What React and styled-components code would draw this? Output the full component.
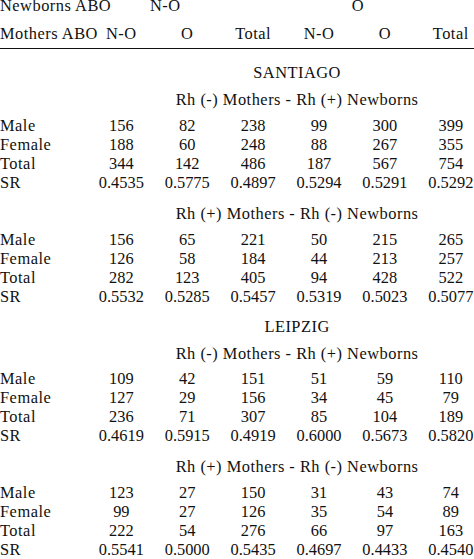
import React from "react";
import styled, { createGlobalStyle } from "styled-components";

const Global = createGlobalStyle`
  html, body {
    margin: 0;
    padding: 0;
    background: #ffffff;
    overflow: hidden;
  }
  body {
    font-family: "Liberation Serif", "Times New Roman", serif;
    color: #111111;
  }
`;

const LABEL_W = 88.4;
const COL_W = 65.9;

const Table = styled.div`
  width: ${LABEL_W + COL_W * 6}px;
  margin-top: -8px;
  font-size: 16.4px;
`;

const HeaderBlock = styled.div`
  border-bottom: 1.3px solid #111111;
`;

const Row = styled.div`
  display: grid;
  grid-template-columns: ${LABEL_W}px repeat(6, ${COL_W}px);
  height: ${(p) => p.$h}px;
  line-height: ${(p) => p.$h}px;
  white-space: nowrap;
`;

const Label = styled.div`
  text-align: left;
  letter-spacing: 0.5px;
`;

const GroupLabel = styled.div`
  grid-column: span 3;
  text-align: left;
  padding-left: ${(p) => p.$pad}px;
  letter-spacing: 0.5px;
`;

const HeadCell = styled.div`
  text-align: center;
  letter-spacing: 0.5px;
`;

const Num = styled.div`
  text-align: center;
`;

const Heading = styled.div`
  box-sizing: border-box;
  margin-left: ${LABEL_W}px;
  width: ${COL_W * 6}px;
  padding-left: 22px;
  margin-top: ${(p) => p.$mt}px;
  height: ${(p) => p.$h}px;
  line-height: ${(p) => p.$h}px;
  text-align: center;
  white-space: nowrap;
  letter-spacing: 0.5px;
`;

const Subgroup = styled.div`
  margin-top: ${(p) => p.$mt}px;
`;

const data = [
  {
    city: "SANTIAGO",
    groups: [
      {
        title: "Rh (-) Mothers - Rh (+) Newborns",
        rows: [
          ["Male", "156", "82", "238", "99", "300", "399"],
          ["Female", "188", "60", "248", "88", "267", "355"],
          ["Total", "344", "142", "486", "187", "567", "754"],
          ["SR", "0.4535", "0.5775", "0.4897", "0.5294", "0.5291", "0.5292"],
        ],
      },
      {
        title: "Rh (+) Mothers - Rh (-) Newborns",
        rows: [
          ["Male", "156", "65", "221", "50", "215", "265"],
          ["Female", "126", "58", "184", "44", "213", "257"],
          ["Total", "282", "123", "405", "94", "428", "522"],
          ["SR", "0.5532", "0.5285", "0.5457", "0.5319", "0.5023", "0.5077"],
        ],
      },
    ],
  },
  {
    city: "LEIPZIG",
    groups: [
      {
        title: "Rh (-) Mothers - Rh (+) Newborns",
        rows: [
          ["Male", "109", "42", "151", "51", "59", "110"],
          ["Female", "127", "29", "156", "34", "45", "79"],
          ["Total", "236", "71", "307", "85", "104", "189"],
          ["SR", "0.4619", "0.5915", "0.4919", "0.6000", "0.5673", "0.5820"],
        ],
      },
      {
        title: "Rh (+) Mothers - Rh (-) Newborns",
        rows: [
          ["Male", "123", "27", "150", "31", "43", "74"],
          ["Female", "99", "27", "126", "35", "54", "89"],
          ["Total", "222", "54", "276", "66", "97", "163"],
          ["SR", "0.5541", "0.5000", "0.5435", "0.4697", "0.4433", "0.4540"],
        ],
      },
    ],
  },
];

export default function App() {
  return (
    <>
      <Global />
      <Table>
        <HeaderBlock>
          <Row $h={28}>
            <Label>Newborns ABO</Label>
            <GroupLabel $pad={61.6}>N-O</GroupLabel>
            <GroupLabel $pad={65.6}>O</GroupLabel>
          </Row>
          <Row $h={28}>
            <Label>Mothers ABO</Label>
            <HeadCell>N-O</HeadCell>
            <HeadCell>O</HeadCell>
            <HeadCell>Total</HeadCell>
            <HeadCell>N-O</HeadCell>
            <HeadCell>O</HeadCell>
            <HeadCell>Total</HeadCell>
          </Row>
        </HeaderBlock>
        {data.map((c, ci) => (
          <section key={c.city}>
            <Heading $mt={ci === 0 ? 12.45 : 8.45} $h={23.9}>
              {c.city}
            </Heading>
            {c.groups.map((g, gi) => (
              <Subgroup key={g.title} $mt={gi === 0 ? 0 : 6.85}>
                <Heading $mt={0} $h={30.3}>
                  {g.title}
                </Heading>
                {g.rows.map((r) => (
                  <Row key={r[0]} $h={19.2}>
                    <Label>{r[0]}</Label>
                    {r.slice(1).map((v, i) => (
                      <Num key={i}>{v}</Num>
                    ))}
                  </Row>
                ))}
              </Subgroup>
            ))}
          </section>
        ))}
      </Table>
    </>
  );
}
